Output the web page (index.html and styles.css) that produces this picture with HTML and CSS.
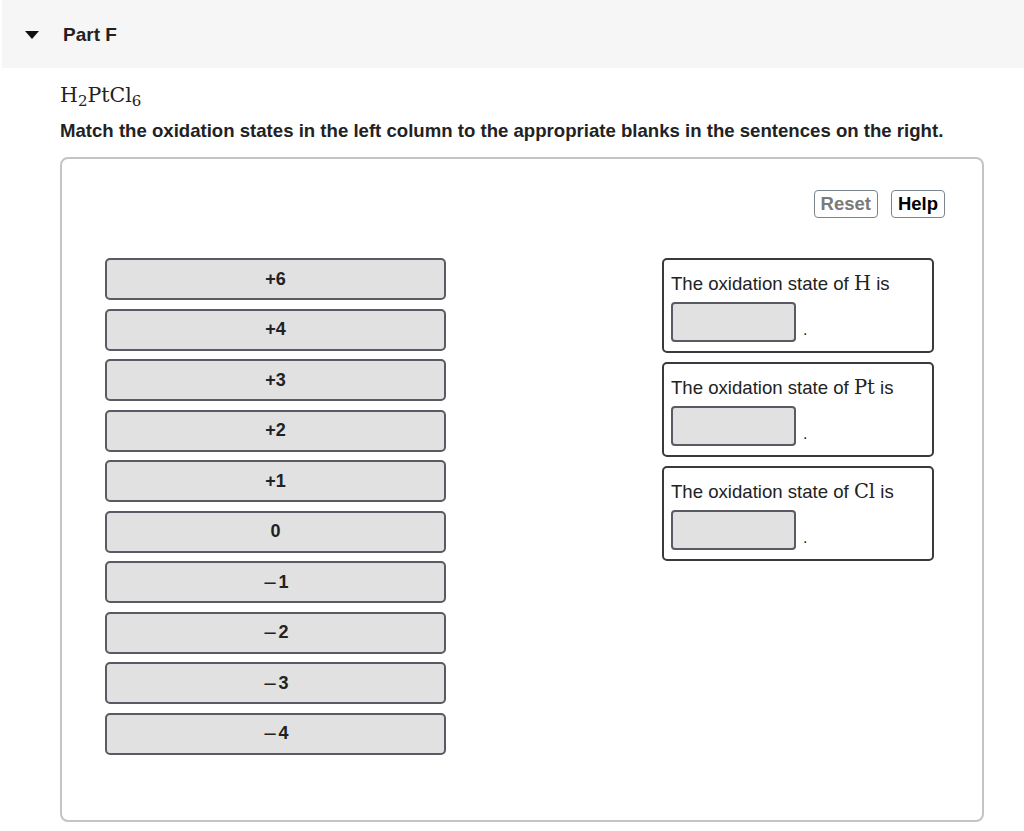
FILE: index.html
```html
<!DOCTYPE html>
<html lang="en">
<head>
    <meta charset="UTF-8">
    <meta name="viewport" content="width=device-width, initial-scale=1.0">
    <title>Part F</title>
    <link rel="stylesheet" href="styles.css">
</head>
<body>
    <div class="part-header">
        <svg class="caret" width="14" height="8" viewBox="0 0 14 8"><polygon points="0,0 14,0 7,8" fill="#111"/></svg>
        <span class="part-title">Part F</span>
    </div>

    <div class="part-body">
        <div class="formula">H<sub>2</sub>PtCl<sub>6</sub></div>
        <p class="instructions">Match the oxidation states in the left column to the appropriate blanks in the sentences on the right.</p>

        <div class="dnd-box">
            <div class="toolbar">
                <button class="tool-btn reset-btn">Reset</button>
                <button class="tool-btn help-btn">Help</button>
            </div>

            <div class="dnd-columns">
                <div class="tiles">
                    <div class="tile">+6</div>
                    <div class="tile">+4</div>
                    <div class="tile">+3</div>
                    <div class="tile">+2</div>
                    <div class="tile">+1</div>
                    <div class="tile">0</div>
                    <div class="tile"><span class="minus">−</span>1</div>
                    <div class="tile"><span class="minus">−</span>2</div>
                    <div class="tile"><span class="minus">−</span>3</div>
                    <div class="tile"><span class="minus">−</span>4</div>
                </div>

                <div class="sentences">
                    <div class="sentence">
                        <div class="sentence-text">The oxidation state of <span class="math">H</span> is</div>
                        <div class="blank-row"><span class="blank"></span><span class="dot">.</span></div>
                    </div>
                    <div class="sentence">
                        <div class="sentence-text">The oxidation state of <span class="math">Pt</span> is</div>
                        <div class="blank-row"><span class="blank"></span><span class="dot">.</span></div>
                    </div>
                    <div class="sentence">
                        <div class="sentence-text">The oxidation state of <span class="math">Cl</span> is</div>
                        <div class="blank-row"><span class="blank"></span><span class="dot">.</span></div>
                    </div>
                </div>
            </div>
        </div>
    </div>
</body>
</html>
```

FILE: styles.css
```css
body {
    margin: 0;
    font-family: "Liberation Sans", Arial, sans-serif;
    color: #222;
    background-color: #ffffff;
}

.part-header {
    height: 68px;
    margin-left: 2px;
    background-color: #f6f6f6;
    display: flex;
    align-items: center;
}

.caret {
    margin-left: 23px;
    margin-right: 24px;
    margin-top: 2px;
}

.part-title {
    font-size: 19px;
    font-weight: bold;
    color: #222;
    margin-top: 2px;
}

.part-body {
    padding: 0 40px 0 60px;
}

.formula {
    font-family: "DejaVu Serif", "Liberation Serif", serif;
    font-size: 20.5px;
    margin-top: 15px;
    line-height: 24px;
    color: #222;
}

.formula sub {
    font-size: 15px;
    line-height: 0;
    vertical-align: -4px;
}

.instructions {
    margin: 13px 0 15px 0;
    font-size: 18.6px;
    line-height: 22px;
    font-weight: bold;
    color: #222;
}

.dnd-box {
    width: 920px;
    height: 661px;
    border: 2px solid #c4c4c4;
    border-radius: 8px;
}

.toolbar {
    display: flex;
    justify-content: flex-end;
    gap: 13px;
    padding: 31px 37px 0 0;
}

.tool-btn {
    height: 28px;
    padding: 0 6px;
    background-color: #fff;
    border: 1px solid #7d858c;
    border-radius: 4px;
    font-family: "Liberation Sans", Arial, sans-serif;
    font-size: 18.5px;
    font-weight: bold;
    cursor: pointer;
}

.reset-btn {
    color: #7a7a7a;
}

.help-btn {
    color: #000;
}

.dnd-columns {
    display: flex;
    justify-content: space-between;
    padding: 40px 48px 0 43px;
}

.tiles {
    display: flex;
    flex-direction: column;
    gap: 8.5px;
}

.tile {
    width: 337px;
    height: 38px;
    border: 2px solid #5a5a62;
    border-radius: 5px;
    background-color: #e1e1e1;
    display: flex;
    align-items: center;
    justify-content: center;
    font-size: 18px;
    font-weight: bold;
    color: #222;
}

.minus {
    font-family: "DejaVu Sans", sans-serif;
    font-weight: normal;
    margin-right: 1px;
}

.sentences {
    display: flex;
    flex-direction: column;
    gap: 9px;
}

.sentence {
    width: 261px;
    height: 91px;
    border: 2px solid #3a3a3e;
    border-radius: 5px;
    padding: 0 0 0 7px;
    box-sizing: content-box;
}

.sentence-text {
    margin-top: 13px;
    font-size: 18.6px;
    line-height: 22px;
    color: #222;
}

.math {
    font-family: "DejaVu Serif", "Liberation Serif", serif;
    font-size: 19.5px;
}

.blank-row {
    display: flex;
    align-items: flex-end;
    margin-top: 7px;
}

.blank {
    display: block;
    width: 121px;
    height: 36px;
    border: 2px solid #5a5a62;
    border-radius: 4px;
    background-color: #e1e1e1;
}

.dot {
    margin-left: 7px;
    margin-bottom: 4px;
    font-size: 16px;
    line-height: 16px;
}
```
